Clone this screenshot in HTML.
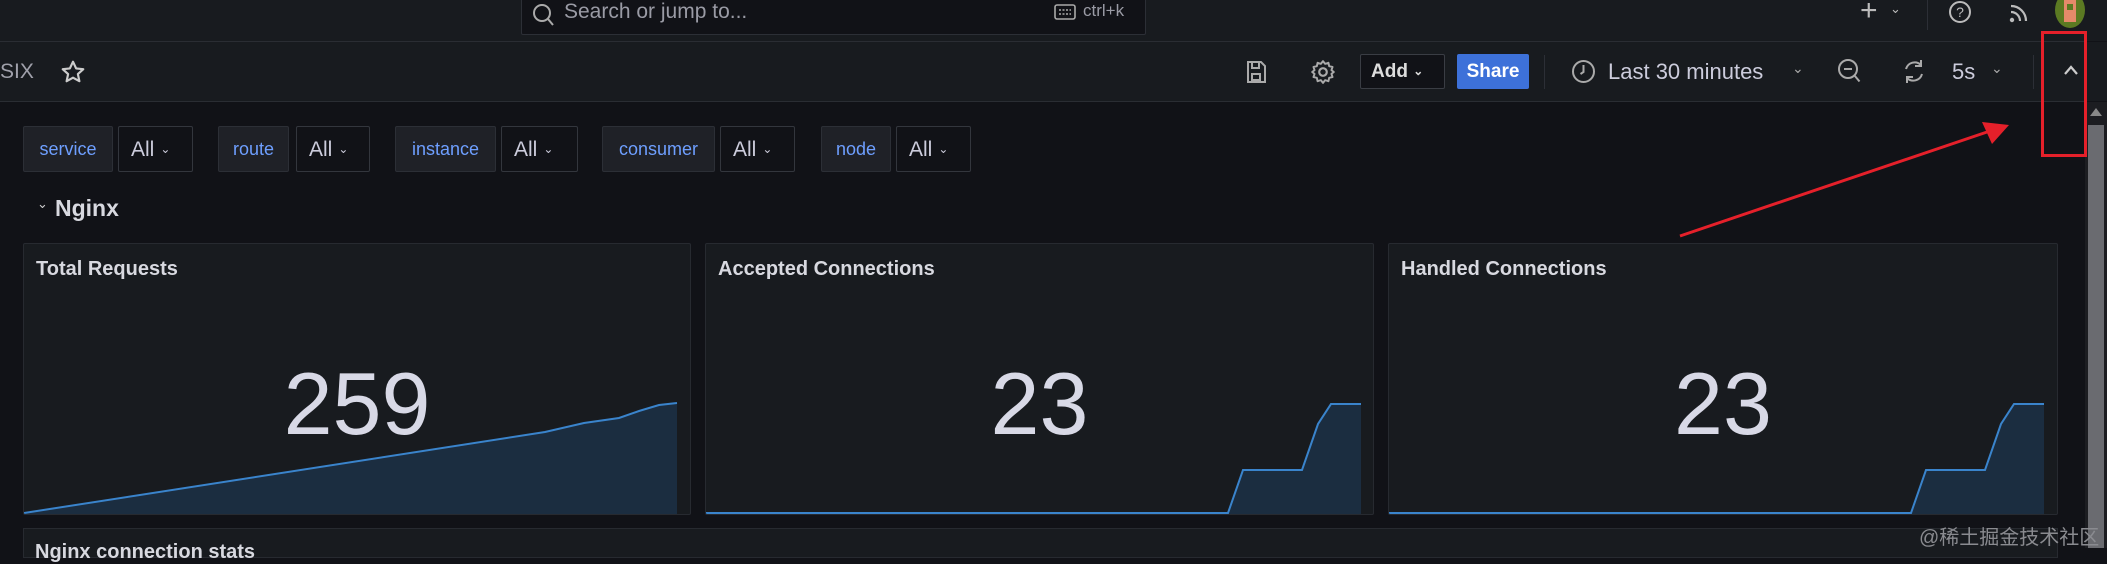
<!DOCTYPE html>
<html><head><meta charset="utf-8"><style>
*{margin:0;padding:0;box-sizing:border-box}
body{width:2107px;height:548px;background:#111217;overflow:hidden;position:relative;font-family:"Liberation Sans",sans-serif;color:#ccccdc}
.a{position:absolute}
.hl{position:absolute;left:0;width:2085px;height:1px;background:#2a2d33}
.lab{position:absolute;top:126px;height:46px;background:#1f2127;border:1px solid #2c2f36;border-radius:2px;color:#6e9fff;font-size:18px;line-height:44px;text-align:center}
.all{position:absolute;top:126px;height:46px;background:#111217;border:1px solid #33363d;border-radius:2px;color:#ccccdc;font-size:21px;line-height:44px;padding-left:12px}
.all span{font-size:12px;margin-left:6px;vertical-align:3px}
.panel{position:absolute;top:243px;height:272px;background:#181b1f;border:1px solid #272a30;border-radius:2px;overflow:hidden}
.panel .t{position:absolute;left:12px;top:14px;font-size:20px;font-weight:bold;color:#d8d9e0}
.panel .n{position:absolute;left:0;right:0;top:110px;text-align:center;font-size:88px;color:#d8d9e6;line-height:100px}
svg.i{position:absolute}
</style></head><body>
<div class="a" style="left:0;top:0;width:2107px;height:41px;background:#181b1f"></div>
<div class="hl" style="top:41px"></div>
<div class="a" style="left:0;top:42px;width:2107px;height:59px;background:#181b1f"></div>
<div class="hl" style="top:101px"></div>
<div class="a" style="left:521px;top:-2px;width:625px;height:37px;background:#111217;border:1px solid #2c2f36;border-radius:2px"></div>
<svg class="i" style="left:532px;top:2px" width="24" height="26" viewBox="0 0 24 26"><circle cx="10" cy="11" r="8" fill="none" stroke="#aaa" stroke-width="2"/><path d="M16 17l5 6" stroke="#aaa" stroke-width="2"/></svg>
<div class="a" style="left:564px;top:0;font-size:21px;color:#9a9ba5">Search or jump to...</div>
<svg class="i" style="left:1054px;top:4px" width="22" height="16"><rect x="1" y="1" width="20" height="14" rx="2" fill="none" stroke="#aaa" stroke-width="1.6"/><path d="M5 6h12M5 10h12" stroke="#aaa" stroke-width="1.5" stroke-dasharray="2 1.5"/></svg>
<div class="a" style="left:1083px;top:1px;font-size:17px;color:#9a9ba5">ctrl+k</div>
<div class="a" style="left:1860px;top:-6px;font-size:30px;color:#bbb">+</div>
<div class="a" style="left:1890px;top:1px;font-size:13px;color:#bbb">⌄</div>
<div class="a" style="left:1927px;top:0;width:1px;height:30px;background:#2c2f36"></div>
<svg class="i" style="left:1948px;top:0" width="24" height="24"><circle cx="12" cy="12" r="10" fill="none" stroke="#bbb" stroke-width="2"/><text x="12" y="17" font-size="14" fill="#bbb" text-anchor="middle" font-family="Liberation Sans">?</text></svg>
<svg class="i" style="left:2008px;top:2px" width="22" height="22"><circle cx="4" cy="18" r="2.2" fill="#bbb"/><path d="M3 10a9 9 0 0 1 9 9M3 4a15 15 0 0 1 15 15" fill="none" stroke="#bbb" stroke-width="2.2"/></svg>
<div class="a" style="left:2055px;top:-8px;width:30px;height:36px;border-radius:50%;background:#5b7a22;overflow:hidden"><div class="a" style="left:9px;top:4px;width:12px;height:26px;background:#e48a6a"></div><div class="a" style="left:12px;top:12px;width:6px;height:6px;background:#5b7a22"></div></div>
<div class="a" style="left:0;top:60px;font-size:21px;color:#a0a1ab">SIX</div>
<svg class="i" style="left:60px;top:59px" width="26" height="26" viewBox="0 0 24 24"><path d="M12 2.5l2.9 6.2 6.6.7-5 4.5 1.4 6.6L12 17.2 6.1 20.5l1.4-6.6-5-4.5 6.6-.7z" fill="none" stroke="#ccc" stroke-width="2" stroke-linejoin="round"/></svg>
<svg class="i" style="left:1244px;top:59px" width="24" height="26" viewBox="0 0 24 26"><path d="M4 3h13l4 4v16H4z" fill="none" stroke="#aaa" stroke-width="2"/><rect x="8" y="3" width="7" height="6" fill="none" stroke="#aaa" stroke-width="2"/><rect x="8" y="15" width="8" height="6" fill="none" stroke="#aaa" stroke-width="2"/></svg>
<svg class="i" style="left:1310px;top:59px" width="26" height="26" viewBox="0 0 24 24"><circle cx="12" cy="12" r="3.5" fill="none" stroke="#aaa" stroke-width="2"/><path d="M12 2l2 2.5 3-1 .7 3.1 3.1.7-1 3 2.2 1.7-2.2 1.7 1 3-3.1.7-.7 3.1-3-1L12 22l-2-2.5-3 1-.7-3.1-3.1-.7 1-3L2 12l2.2-1.7-1-3 3.1-.7.7-3.1 3 1z" fill="none" stroke="#aaa" stroke-width="1.8" stroke-linejoin="round"/></svg>
<div class="a" style="left:1360px;top:54px;width:85px;height:35px;border:1px solid #3a3d44;border-radius:2px;background:#111217;font-size:19px;font-weight:bold;color:#ddd;line-height:33px;padding-left:10px">Add <span style="font-size:12px;vertical-align:2px">⌄</span></div>
<div class="a" style="left:1457px;top:54px;width:72px;height:35px;border-radius:2px;background:#3d71d9;font-size:19px;font-weight:bold;color:#fff;line-height:35px;text-align:center">Share</div>
<div class="a" style="left:1544px;top:55px;width:1px;height:34px;background:#2c2f36"></div>
<svg class="i" style="left:1571px;top:59px" width="25" height="25"><circle cx="12.5" cy="12.5" r="10.5" fill="none" stroke="#aaa" stroke-width="2"/><path d="M12.5 6v7l-3 2" fill="none" stroke="#aaa" stroke-width="2"/></svg>
<div class="a" style="left:1608px;top:59px;font-size:22px;color:#ccccdc">Last 30 minutes</div>
<div class="a" style="left:1792px;top:60px;font-size:14px;color:#aaa">⌄</div>
<svg class="i" style="left:1837px;top:58px" width="26" height="27"><circle cx="11" cy="11" r="9" fill="none" stroke="#aaa" stroke-width="2"/><path d="M7 11h8M17.5 17.5l5 6" stroke="#aaa" stroke-width="2"/></svg>
<svg class="i" style="left:1901px;top:58px" width="26" height="27" viewBox="0 0 26 27"><path d="M20 7a9 9 0 0 0-15 4M6 20a9 9 0 0 0 15-4" fill="none" stroke="#aaa" stroke-width="2"/><path d="M20 2v6h-6M6 25v-6h6" fill="none" stroke="#aaa" stroke-width="2"/></svg>
<div class="a" style="left:1952px;top:59px;font-size:22px;color:#ccccdc">5s</div>
<div class="a" style="left:1991px;top:60px;font-size:14px;color:#aaa">⌄</div>
<div class="a" style="left:2033px;top:55px;width:1px;height:34px;background:#2c2f36"></div>
<svg class="i" style="left:2063px;top:64px" width="16" height="12"><path d="M2 10l6-7 6 7" fill="none" stroke="#ccc" stroke-width="2.2"/></svg>
<div class="a" style="left:2085px;top:102px;width:22px;height:446px;background:#1c1d21"></div>
<div class="a" style="left:2088px;top:125px;width:16px;height:423px;background:#6a6b70"></div>
<div class="a" style="left:2090px;top:108px;width:0;height:0;border-left:6px solid transparent;border-right:6px solid transparent;border-bottom:8px solid #888"></div>
<div class="lab" style="left:23px;width:90px">service</div><div class="all" style="left:118px;width:75px">All<span>⌄</span></div>
<div class="lab" style="left:218px;width:71px">route</div><div class="all" style="left:296px;width:74px">All<span>⌄</span></div>
<div class="lab" style="left:395px;width:101px">instance</div><div class="all" style="left:501px;width:77px">All<span>⌄</span></div>
<div class="lab" style="left:602px;width:113px">consumer</div><div class="all" style="left:720px;width:75px">All<span>⌄</span></div>
<div class="lab" style="left:821px;width:70px">node</div><div class="all" style="left:896px;width:75px">All<span>⌄</span></div>
<div class="a" style="left:37px;top:196px;font-size:13px;color:#ccc">⌄</div>
<div class="a" style="left:55px;top:195px;font-size:23px;font-weight:bold;color:#d8d9e0">Nginx</div>
<div class="panel" style="left:23px;width:668px"><div class="t">Total Requests</div><div class="n">259</div>
<svg class="a" style="left:0;top:0" width="668" height="272"><path d="M0 269L521 188L560 179L595 174L615 167L635 161L653 159V272H0Z" fill="#1b2d40"/><path d="M0 269L521 188L560 179L595 174L615 167L635 161L653 159" fill="none" stroke="#3a84cc" stroke-width="2"/></svg></div>
<div class="panel" style="left:705px;width:669px"><div class="t">Accepted Connections</div><div class="n">23</div>
<svg class="a" style="left:0;top:0" width="669" height="272"><path d="M0 269H522L537 226H596L612 180L625 160H655V272H0Z" fill="#1b2d40"/><path d="M0 269H522L537 226H596L612 180L625 160H655" fill="none" stroke="#3a84cc" stroke-width="2"/></svg></div>
<div class="panel" style="left:1388px;width:670px"><div class="t">Handled Connections</div><div class="n">23</div>
<svg class="a" style="left:0;top:0" width="670" height="272"><path d="M0 269H522L537 226H596L612 180L625 160H655V272H0Z" fill="#1b2d40"/><path d="M0 269H522L537 226H596L612 180L625 160H655" fill="none" stroke="#3a84cc" stroke-width="2"/></svg></div>
<div class="a" style="left:23px;top:528px;width:2035px;height:30px;background:#181b1f;border:1px solid #272a30"></div>
<div class="a" style="left:35px;top:541px;font-size:20px;font-weight:bold;color:#d8d9e0">Nginx connection stats</div>
<div class="a" style="left:1919px;top:521px;font-size:20px;color:#8a8b90;font-family:'Liberation Sans','Noto Sans CJK SC',sans-serif">@稀土掘金技术社区</div>
<div class="a" style="left:2041px;top:31px;width:46px;height:126px;border:3px solid #e5202a"></div>
<svg class="a" style="left:0;top:0" width="2107" height="548"><path d="M1680 236L1990 131" stroke="#e5202a" stroke-width="3"/><path d="M2009 125L1982 122L1992 144Z" fill="#e5202a"/></svg>
</body></html>
